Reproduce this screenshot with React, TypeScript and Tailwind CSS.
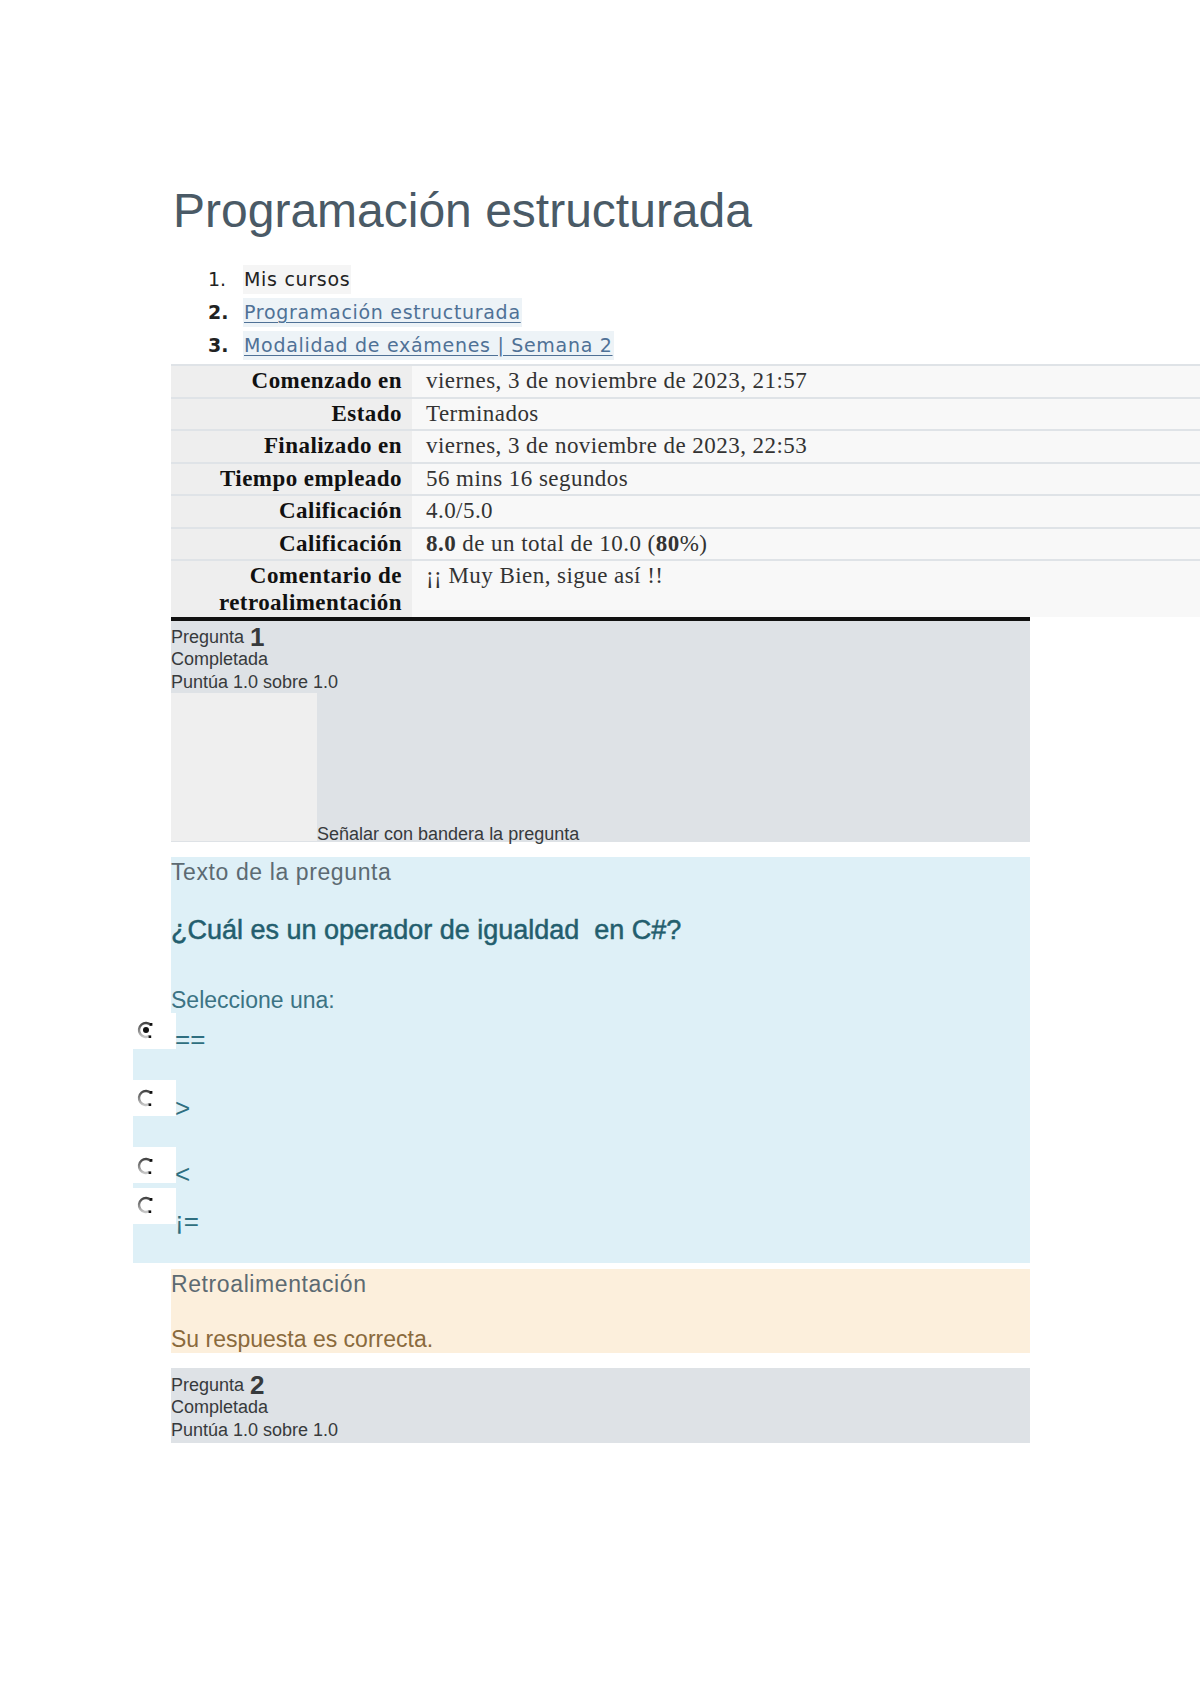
import React from "react";

// Moodle-style quiz review page

type Row = { label: React.ReactNode; value: React.ReactNode; tall?: boolean };

const rows: Row[] = [
  { label: "Comenzado en", value: "viernes, 3 de noviembre de 2023, 21:57" },
  { label: "Estado", value: "Terminados" },
  { label: "Finalizado en", value: "viernes, 3 de noviembre de 2023, 22:53" },
  { label: "Tiempo empleado", value: "56 mins 16 segundos" },
  { label: "Calificación", value: "4.0/5.0" },
  {
    label: "Calificación",
    value: (
      <>
        <b>8.0</b> de un total de 10.0 (<b>80</b>%)
      </>
    ),
  },
  {
    label: (
      <>
        Comentario de
        <br />
        retroalimentación
      </>
    ),
    value: "¡¡ Muy Bien, sigue así !!",
    tall: true,
  },
];

function Radio({ checked }: { checked?: boolean }) {
  const id = checked ? "rg1" : "rg0";
  return (
    <svg width="22" height="22" viewBox="0 0 22 22">
      <defs>
        <linearGradient id={id} x1="0" y1="0" x2="0" y2="1">
          <stop offset="0" stopColor="#444" />
          <stop offset="1" stopColor="#c8c8c8" />
        </linearGradient>
      </defs>
      <path d="M15.95 6.05 A7 7 0 1 0 14.5 17.06" fill="none" stroke={`url(#${id})`} strokeWidth="2.4" />
      <rect x="14.8" y="4" width="2.6" height="2.8" fill="#111" />
      <rect x="13.6" y="16.4" width="2.6" height="2.6" fill="#111" />
      {checked && <circle cx="11" cy="11" r="3" fill="#111" />}
    </svg>
  );
}

function Option({
  text,
  checked,
  h,
  radioTop,
  textTop,
}: {
  text: string;
  checked?: boolean;
  h: string;
  radioTop: string;
  textTop: string;
}) {
  return (
    <div className={`flex items-start ${h}`}>
      <div className="w-[43px] h-[36px] bg-white shrink-0">
        <div className={`ml-[2px] ${radioTop}`}>
          <Radio checked={checked} />
        </div>
      </div>
      <span className={`${textTop} -ml-[1px] text-[26px] leading-[26px] text-[#2f6f80]`}>{text}</span>
    </div>
  );
}

function QuestionInfo({ n, children }: { n: number; children?: React.ReactNode }) {
  return (
    <div className="font-['Liberation_Sans',Arial,sans-serif] text-[18px] text-[#373a3c]">
      <div className="h-[22px] leading-[22px] pt-[1px] flex items-end">
        <span>Pregunta</span>
        <span className="ml-[6px] text-[26px] font-bold leading-[22px]">{n}</span>
      </div>
      <div className="h-[23px] leading-[23px]">Completada</div>
      <div className="h-[22px] leading-[22px]">Puntúa 1.0 sobre 1.0</div>
      {children}
    </div>
  );
}

export default function App() {
  return (
    <div className="w-[1200px] min-h-[1698px] bg-white overflow-hidden">
      <div className="pt-[183px] pl-[173px]">
        <h1 className="font-['Liberation_Sans',Arial,sans-serif] text-[48px] leading-[56px] text-[#4a5a66]">
          Programación estructurada
        </h1>
      </div>

      {/* Breadcrumb */}
      <ol className="mt-[24px] pl-[208px] font-['DejaVu_Sans',Verdana,sans-serif] text-[19px]">
        <li className="h-[33px] flex items-center">
          <span className="w-[35px] text-[#222]">1.</span>
          <span className="bg-[#f5f5f5] px-[1px] tracking-[0.7px] text-[#222]">Mis cursos</span>
        </li>
        <li className="h-[33px] flex items-center">
          <span className="w-[35px] font-bold text-[#222]">2.</span>
          <span className="bg-[#edf3f7] px-[1px] tracking-[0.7px] text-[#4f7196] underline underline-offset-[3px]">
            Programación estructurada
          </span>
        </li>
        <li className="h-[33px] flex items-center">
          <span className="w-[35px] font-bold text-[#222]">3.</span>
          <span className="bg-[#edf3f7] px-[1px] tracking-[0.7px] text-[#4f7196] underline underline-offset-[3px]">
            Modalidad de exámenes | Semana 2
          </span>
        </li>
      </ol>

      {/* Summary table */}
      <div className="mt-[2px] ml-[171px] w-[1029px] font-['Liberation_Serif','Times_New_Roman',serif] text-[23px] tracking-[0.45px]">
        {rows.map((r, i) => (
          <div
            key={i}
            className={`grid grid-cols-[241px_1fr] border-t-2 border-[#dfe3e7] ${r.tall ? "h-[58px]" : "h-[32.5px]"}`}
          >
            <div className="bg-[#eeeeee] pr-[10px] text-right font-bold text-[#111] leading-[27px] pt-[1px]">
              {r.label}
            </div>
            <div className="bg-[#f8f8f8] pl-[14px] text-[#333] leading-[27px] pt-[1px]">{r.value}</div>
          </div>
        ))}
      </div>

      {/* Question 1 info */}
      <div className="ml-[171px] w-[859px] h-[225px] border-t-4 border-[#111] bg-[#dee2e6] pt-[5px]">
        <QuestionInfo n={1}>
          <div className="flex h-[152px]">
            <div className="w-[146px] h-[148px] bg-[#efefef]" />
            <span className="self-end leading-[22px]">Señalar con bandera la pregunta</span>
          </div>
        </QuestionInfo>
      </div>

      {/* Question text */}
      <div className="mt-[15px] font-['Liberation_Sans',Arial,sans-serif]">
        <div className="ml-[171px] w-[859px] bg-[#def0f7]">
          <p className="pt-[2px] text-[23px] leading-[26px] tracking-[0.6px] text-[#5c6a72]">Texto de la pregunta</p>
          <p className="mt-[30px] text-[27px] leading-[30px] text-[#235e6e] [-webkit-text-stroke:0.5px_#235e6e]">
            ¿Cuál es un operador de igualdad&nbsp; en C#?
          </p>
          <p className="mt-[42px] text-[23px] leading-[26px] text-[#3b7384]">Seleccione una:</p>
        </div>
        <div className="ml-[133px] w-[897px] bg-[#def0f7]">
          <Option text="==" checked h="h-[67px]" radioTop="mt-[6px]" textTop="mt-[13px]" />
          <Option text=">" h="h-[67px]" radioTop="mt-[7px]" textTop="mt-[15px]" />
          <Option text="<" h="h-[41px]" radioTop="mt-[8px]" textTop="mt-[14px]" />
          <Option text="¡=" h="h-[75px]" radioTop="mt-[6px]" textTop="mt-[20px]" />
        </div>

        {/* Feedback */}
        <div className="mt-[6px] ml-[171px] w-[859px] h-[84px] bg-[#fcefdc]">
          <p className="pt-[2px] text-[23px] leading-[26px] tracking-[0.6px] text-[#5c6a72]">Retroalimentación</p>
          <p className="mt-[29px] text-[23px] leading-[26px] text-[#8a6a3c]">Su respuesta es correcta.</p>
        </div>
      </div>

      {/* Question 2 info */}
      <div className="mt-[15px] ml-[171px] w-[859px] h-[75px] bg-[#dee2e6] pt-[6px]">
        <QuestionInfo n={2} />
      </div>
    </div>
  );
}
